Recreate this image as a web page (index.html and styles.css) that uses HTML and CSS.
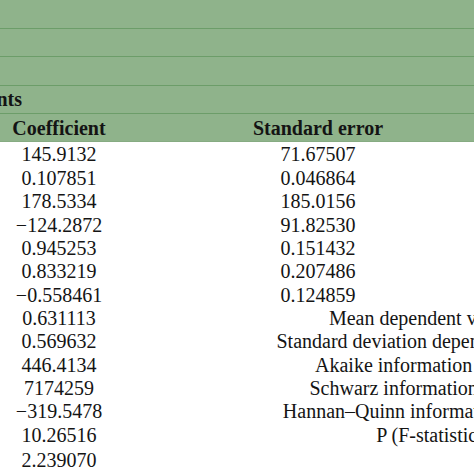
FILE: index.html
```
<!DOCTYPE html>
<html>
<head>
<meta charset="utf-8">
<link rel="stylesheet" href="styles.css">
</head>
<body>
<div class="page">
  <div class="band">
    <div class="grow"></div>
    <div class="grow"></div>
    <div class="grow"></div>
    <div class="grow section"><div class="clip"><span>Estimated coefficients</span></div></div>
    <div class="grow head">
      <div class="cell c1">Coefficient</div>
      <div class="cell c2">Standard error</div>
    </div>
  </div>
  <div class="data">
    <div class="row"><div class="cell c1">145.9132</div><div class="cell c2">71.67507</div></div>
    <div class="row"><div class="cell c1">0.107851</div><div class="cell c2">0.046864</div></div>
    <div class="row"><div class="cell c1">178.5334</div><div class="cell c2">185.0156</div></div>
    <div class="row"><div class="cell c1">−124.2872</div><div class="cell c2">91.82530</div></div>
    <div class="row"><div class="cell c1">0.945253</div><div class="cell c2">0.151432</div></div>
    <div class="row"><div class="cell c1">0.833219</div><div class="cell c2">0.207486</div></div>
    <div class="row"><div class="cell c1">−0.558461</div><div class="cell c2">0.124859</div></div>
    <div class="row"><div class="cell c1">0.631113</div><div class="cell c2 stat">Mean dependent variable</div></div>
    <div class="row"><div class="cell c1">0.569632</div><div class="cell c2 stat">Standard deviation dependent variable</div></div>
    <div class="row"><div class="cell c1">446.4134</div><div class="cell c2 stat">Akaike information criterion</div></div>
    <div class="row"><div class="cell c1">7174259</div><div class="cell c2 stat">Schwarz information criterion</div></div>
    <div class="row"><div class="cell c1">−319.5478</div><div class="cell c2 stat">Hannan–Quinn information criterion</div></div>
    <div class="row"><div class="cell c1">10.26516</div><div class="cell c2 stat">P (F-statistic)</div></div>
    <div class="row last"><div class="cell c1">2.239070</div><div class="cell c2"></div></div>
  </div>
</div>
</body>
</html>
```
FILE: styles.css
```
html, body {
  margin: 0;
  padding: 0;
  background: #ffffff;
}
body {
  width: 474px;
  height: 474px;
  overflow: hidden;
  font-family: "Liberation Serif", Tinos, "Times New Roman", "Nimbus Roman", "DejaVu Serif", serif;
  font-size: 20px;
  color: #141414;
}
.page {
  width: 474px;
  height: 474px;
  overflow: hidden;
  font-family: "Liberation Serif", Tinos, "Times New Roman", "Nimbus Roman", "DejaVu Serif", serif;
}
.band {
  background: #8fb38b;
  display: flex;
  flex-direction: column;
}
.grow {
  box-sizing: border-box;
  height: 28.5px;
  border-bottom: 1.5px solid #6c9d69;
  display: flex;
  align-items: center;
}
.grow.head {
  height: 28px;
  border-bottom: 1px solid #86ab82;
  display: grid;
  grid-template-columns: 118px 400px;
  font-weight: bold;
}
.section {
  font-weight: bold;
}
.clip {
  width: 22px;
  overflow: hidden;
  display: flex;
  justify-content: flex-end;
  white-space: nowrap;
  line-height: 26px;
}
.data {
  padding-top: 1.3px;
}
.row {
  height: 23.35px;
  display: grid;
  grid-template-columns: 118px 400px;
}
.row.last {
  margin-top: 2.4px;
}
.cell {
  display: flex;
  justify-content: center;
  align-items: center;
  white-space: nowrap;
  line-height: 23px;
}
.grow.head .cell {
  line-height: 26px;
}
.cell.stat {
  padding-left: 224px;
}
```
